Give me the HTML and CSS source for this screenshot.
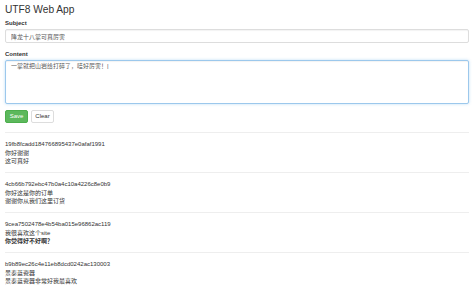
FILE: index.html
```html
<!DOCTYPE html>
<html lang="zh">
<head>
<meta charset="utf-8">
<title>UTF8 Web App</title>
<link rel="stylesheet" href="styles.css">
</head>
<body>
<div class="container">
  <h3 class="title">UTF8 Web App</h3>
  <form class="form">
    <div class="form-group">
      <label class="label">Subject</label>
      <input class="control" type="text" value="降龙十八掌可真厉害">
    </div>
    <div class="form-group">
      <label class="label">Content</label>
      <textarea class="control area">一掌就把山岩给打碎了，哇好厉害！|</textarea>
    </div>
    <div class="actions">
      <button type="button" class="btn btn-save">Save</button>
      <button type="button" class="btn btn-clear">Clear</button>
    </div>
  </form>
  <div class="list">
    <div class="item">
      <div>19fb8fcadd184766895437e0afaf1991</div>
      <div>你好谢谢</div>
      <div>这可真好</div>
    </div>
    <div class="item">
      <div>4cb66b792ebc47b0a4c10a4226c8e0b9</div>
      <div>你好这是你的订单</div>
      <div>谢谢你从我们这里订货</div>
    </div>
    <div class="item">
      <div>9cea7502478e4b54ba015e96862ac119</div>
      <div>我很喜欢这个site</div>
      <div class="strong">你觉得好不好啊？</div>
    </div>
    <div class="item">
      <div>b9b89ec26c4e11eb8dcd0242ac130003</div>
      <div>景泰蓝瓷器</div>
      <div>景泰蓝瓷器非常好我最喜欢</div>
    </div>
  </div>
</div>
</body>
</html>
```

FILE: styles.css
```css
* { box-sizing: border-box; }
html, body {
  margin: 0;
  padding: 0;
  background: #fff;
}
body {
  font-family: "Liberation Sans", "Noto Sans CJK SC", sans-serif;
  font-size: 6px;
  line-height: 8.4px;
  color: #333;
}
.container {
  padding: 0 5px;
}
.title {
  margin: 4px 0 3.5px;
  font-size: 10.2px;
  line-height: 11px;
  font-weight: 500;
  color: #333;
}
.form-group {
  margin-bottom: 6.3px;
}
.label {
  display: block;
  font-weight: bold;
  margin-bottom: 2.1px;
}
.control {
  display: block;
  width: 100%;
  height: 14.3px;
  padding: 1.5px 5px;
  font-family: "Liberation Sans", "Noto Sans CJK SC", sans-serif;
  font-size: 6px;
  line-height: 8.4px;
  color: #555;
  background: #fff;
  border: 1px solid #ddd;
  border-radius: 2px;
  box-shadow: inset 0 1px 1px rgba(0,0,0,.05);
  outline: none;
}
.area {
  height: 43.5px;
  resize: none;
  padding: 1px 5px;
  border-color: #9cc8ec;
  box-shadow: inset 0 1px 1px rgba(0,0,0,.05), 0 0 3px rgba(102,175,233,.45);
}
.actions {
  display: flex;
  gap: 3px;
  margin-bottom: 9px;
}
.btn {
  width: 23px;
  height: 13.5px;
  padding: 0;
  font-family: "Liberation Sans", sans-serif;
  font-size: 6px;
  line-height: 8.4px;
  border-radius: 2px;
  border: 1px solid transparent;
}
.btn-save {
  background: #5cb85c;
  border-color: #4cae4c;
  color: #fff;
}
.btn-clear {
  background: #fff;
  border-color: #ddd;
  color: #333;
}
.item {
  border-top: 1px solid #eee;
  padding: 6.8px 0 7px;
}
.strong {
  font-weight: bold;
}
```
